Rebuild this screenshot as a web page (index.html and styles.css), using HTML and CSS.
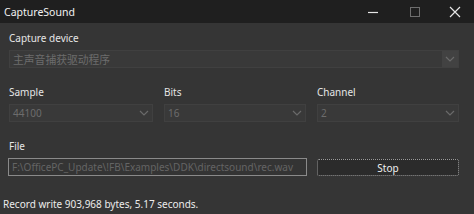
FILE: index.html
```html
<!DOCTYPE html>
<html lang="en">

<head>
  <meta charset="UTF-8">
  <title>CaptureSound</title>
  <link rel="stylesheet" href="styles.css">
</head>

<body>
  <div class='window'>
    <div class='titlebar'>
      <span class='title'>CaptureSound</span>
      <div class='controls'>
        <span class='ctl'><svg width="12" height="12" viewBox="0 0 12 12"><path d="M1 6.5h10" stroke="#e6e6e6" stroke-width="1.2"/></svg></span>
        <span class='ctl'><svg width="12" height="12" viewBox="0 0 12 12"><rect x="1.5" y="1.5" width="9" height="9" fill="none" stroke="#6e6e6e" stroke-width="1"/></svg></span>
        <span class='ctl'><svg width="12" height="12" viewBox="0 0 12 12"><path d="M1 1l10 10M11 1L1 11" stroke="#e6e6e6" stroke-width="1.2"/></svg></span>
      </div>
    </div>

    <div class='content'>
      <div class='field'>
        <label>Capture device</label>
        <div class='combo'>
          <span class='value cjk'>主声音捕获驱动程序</span>
          <span class='arrow boxed'><svg width="10" height="6" viewBox="0 0 10 6"><path d="M1 1l4 4 4-4" fill="none" stroke="#6a6a6a" stroke-width="1.2"/></svg></span>
        </div>
      </div>

      <div class='row3'>
        <div class='field'>
          <label>Sample</label>
          <div class='combo'>
            <span class='value'>44100</span>
            <span class='arrow'><svg width="10" height="6" viewBox="0 0 10 6"><path d="M1 1l4 4 4-4" fill="none" stroke="#6a6a6a" stroke-width="1.2"/></svg></span>
          </div>
        </div>
        <div class='field'>
          <label>Bits</label>
          <div class='combo'>
            <span class='value'>16</span>
            <span class='arrow'><svg width="10" height="6" viewBox="0 0 10 6"><path d="M1 1l4 4 4-4" fill="none" stroke="#6a6a6a" stroke-width="1.2"/></svg></span>
          </div>
        </div>
        <div class='field'>
          <label>Channel</label>
          <div class='combo'>
            <span class='value'>2</span>
            <span class='arrow'><svg width="10" height="6" viewBox="0 0 10 6"><path d="M1 1l4 4 4-4" fill="none" stroke="#6a6a6a" stroke-width="1.2"/></svg></span>
          </div>
        </div>
      </div>

      <div class='field'>
        <label>File</label>
        <div class='filerow'>
          <div class='edit'>F:\OfficePC_Update\!FB\Examples\DDK\directsound\rec.wav</div>
          <button class='btn'>Stop</button>
        </div>
      </div>
    </div>

    <div class='status'>Record write 903,968 bytes, 5.17 seconds.</div>
  </div>
</body>
</html>
```

FILE: styles.css
```css
body {
  margin: 0;
  background: #353535;
  font-family: "Noto Sans", "Open Sans", sans-serif;
  font-size: 10px;
  color: #e4e4e4;
}
.window {
  width: 474px;
  height: 214px;
  display: flex;
  flex-direction: column;
  overflow: hidden;
}
.titlebar {
  height: 23px;
  background: #1f1f1f;
  display: flex;
  align-items: center;
  justify-content: space-between;
}
.title {
  padding-left: 4px;
  font-size: 10.5px;
  color: #f2f2f2;
}
.controls {
  display: flex;
  height: 100%;
}
.ctl {
  width: 42px;
  display: flex;
  align-items: center;
  justify-content: center;
}
.ctl:last-child { width: 38px; }
.content {
  padding: 8px 15px 0 9px;
  display: flex;
  flex-direction: column;
  gap: 17px;
}
.field {
  display: flex;
  flex-direction: column;
  gap: 5px;
}
label {
  line-height: 14px;
  color: #e6e6e6;
}
.combo {
  background: #393939;
  border: 1px solid #404040;
  display: flex;
  align-items: center;
  justify-content: space-between;
  box-sizing: border-box;
  height: 18px;
}
.value {
  padding-left: 3px;
  color: #6c6c6c;
}
.cjk {
  font-family: "Noto Sans CJK SC", sans-serif;
  font-size: 10.8px;
}
.arrow {
  width: 16px;
  height: 100%;
  display: flex;
  align-items: center;
  justify-content: center;
}
.arrow.boxed { background: #424242; }
.row3 {
  display: grid;
  grid-template-columns: 144px 142px 142px;
  column-gap: 11px;
}
.filerow {
  display: grid;
  grid-template-columns: 299px 142px;
  column-gap: 10px;
  margin-left: -1px;
}
.edit {
  height: 18px;
  box-sizing: border-box;
  border: 1px solid #8a8a8a;
  background: #343434;
  color: #646464;
  padding-left: 3px;
  line-height: 16px;
  white-space: nowrap;
  overflow: hidden;
}
.btn {
  height: 17px;
  margin-top: 1px;
  background: #2b2b2b;
  border: 1px dotted #9a9a9a;
  border-radius: 2px;
  color: #f0f0f0;
  font-family: "Noto Sans", "Open Sans", sans-serif;
  font-size: 10px;
  padding: 0;
  line-height: 14px;
}
.status {
  margin-top: auto;
  padding: 0 0 3px 3px;
  line-height: 14px;
  color: #ececec;
}
```
